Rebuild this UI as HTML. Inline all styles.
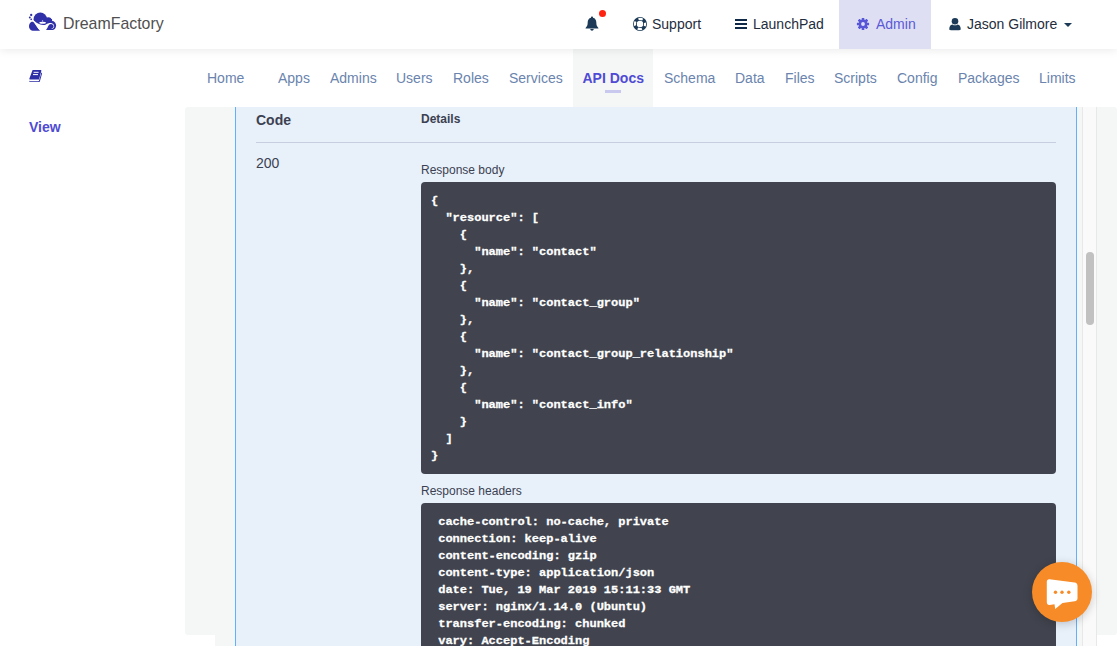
<!DOCTYPE html>
<html>
<head>
<meta charset="utf-8">
<title>DreamFactory</title>
<style>
*{box-sizing:border-box;margin:0;padding:0}
html,body{width:1117px;height:646px;overflow:hidden;background:#fff;font-family:"Liberation Sans",sans-serif;}
body{position:relative}
.abs{position:absolute}
#topbar{position:absolute;left:0;top:0;width:1117px;height:49px;background:#fff;box-shadow:0 1px 9px rgba(0,0,0,.09);z-index:5}
#brand{position:absolute;left:63px;top:13.5px;font-size:17px;color:#505050;white-space:nowrap;transform-origin:left center;transform:scaleX(.935)}
.tn{position:absolute;top:0;height:49px;line-height:48px;font-size:14px;color:#1f2d3d;white-space:nowrap}
#adminbg{position:absolute;left:839px;top:0;width:92px;height:49px;background:#dfdff4}
#nav2{position:absolute;left:0;top:49px;width:1117px;height:58px;background:#fff;z-index:3}
.n2{position:absolute;top:0;height:56px;line-height:58px;font-size:14px;color:#6a84ad;white-space:nowrap}
#apibg{position:absolute;left:573px;top:0;width:80px;height:58px;background:#f5f7f7}
#apidocs{color:#4f4bd4;font-weight:bold}
#apiul{position:absolute;left:605px;top:41px;width:16px;height:3px;background:#c9c9f0}
#view{position:absolute;left:29px;top:119px;font-size:14px;font-weight:bold;color:#4f4bd4}
#panel{position:absolute;left:185px;top:107px;width:932px;height:528px;background:#f5f7f7;border-radius:3px;z-index:1}
#panel2{position:absolute;left:215px;top:107px;width:882px;height:541px;background:#f5f7f7;z-index:1}
#opblock{position:absolute;left:235px;top:100px;width:842px;height:560px;background:#e8f0fa;border:1px solid #61affe;z-index:2}
#sbtrack{position:absolute;left:1082px;top:107px;width:15px;height:541px;background:#fafafa;border-left:1px solid #e8e8e8;border-right:1px solid #e8e8e8;z-index:2}
#sbthumb{position:absolute;left:1086px;top:252px;width:8px;height:73px;border-radius:4px;background:#c1c1c1;z-index:3}
.h{position:absolute;z-index:3;white-space:nowrap}
#hr{position:absolute;left:256px;top:142px;width:800px;height:1px;background:#c5cfdf;z-index:3}
pre{position:absolute;z-index:3;background:#41444e;color:#fff;font-family:"Liberation Mono",monospace;font-weight:bold;font-size:12px;line-height:17px;border-radius:4px;white-space:pre}
pre span{display:block;height:17px;transform:scaleY(.87);transform-origin:0 12.5px;-webkit-text-stroke:.3px #fff}
#chat{position:absolute;left:1032px;top:562px;width:60px;height:60px;border-radius:50%;background:#f68b28;z-index:10;box-shadow:0 2px 10px rgba(0,0,0,.2)}
</style>
</head>
<body>
<div id="topbar">
  <svg id="logo" style="position:absolute;left:24px;top:8px" width="40" height="30" viewBox="0 0 40 30">
<g fill="#3030a8">
<circle cx="7.2" cy="7" r="1.15"/><circle cx="5.8" cy="9.5" r=".95"/><circle cx="7.2" cy="11.4" r=".8"/>
<circle cx="16.3" cy="11.3" r="6.7"/>
<circle cx="24.3" cy="12.5" r="3.3"/>
<ellipse cx="28.2" cy="17.6" rx="3.9" ry="4.5"/>
<path d="M10 11 L28 11 L29 22.1 L21.5 22.1 L13 18 Z"/>
<path d="M8.2 13.6 C5.6 14.4 4.5 17.6 5.3 19.9 C6 21.9 7.8 22.8 10 22.8 L16.2 22.8 C13.6 20.2 11.6 16.6 9.9 14.3 C9.5 13.7 8.8 13.4 8.2 13.6 Z"/>
</g>
<path fill="#fff" d="M7 12.7 C8.5 12.1 9.6 12.2 10.5 13.1 C11.5 14.2 12.8 15.1 14 15.6 C16 16.5 19 17.8 22 16.4 C23.5 15.7 25 14.9 27 15.1 C29.1 15.4 30.3 16.8 30.2 18.5 C30.1 20 29 20.9 27.6 20.7 L27.6 20.2 C28.7 20.3 29.6 19.5 29.6 18.3 C29.6 17 28.4 16 27 16 C25.4 16 24.5 17.4 24 18.6 C23.3 20.3 22.6 21.6 21.4 22.9 L16.4 22.9 C14 20.5 12 17 10 14.5 C9.2 13.5 8 13.2 7 12.7 Z"/>
<ellipse cx="18.6" cy="14.7" rx="3.3" ry=".95" fill="#fff"/>
<rect x="18.1" y="12" width="1" height="2.2" fill="#a5a5dc"/>
</svg>
  <div id="brand">DreamFactory</div>
  <div id="adminbg"></div>

  <svg style="position:absolute;left:585px;top:16px" width="14" height="16" viewBox="0 0 14 16"><path fill="#1c3a57" d="M7 .4 C7.6 .4 8 .8 8 1.4 L8 1.7 C10.2 2.2 11.3 4 11.3 6.3 C11.3 9.3 12 10.6 13.4 11.9 L13.4 12.6 L.6 12.6 L.6 11.9 C2 10.6 2.7 9.3 2.7 6.3 C2.7 4 3.8 2.2 6 1.7 L6 1.4 C6 .8 6.4 .4 7 .4 Z M5.3 13.1 L8.7 13.1 C8.7 14.1 7.9 14.8 7 14.8 C6.1 14.8 5.3 14.1 5.3 13.1Z"/></svg>
  <div style="position:absolute;left:599px;top:10px;width:7px;height:7px;border-radius:50%;background:#ff2412"></div>
  <svg style="position:absolute;left:632px;top:16px" width="16" height="16" viewBox="0 0 16 16"><circle cx="8" cy="8" r="5.1" fill="none" stroke="#1c3a57" stroke-width="3.8"/><circle cx="8" cy="8" r="5.1" fill="none" stroke="#fff" stroke-width="2.1" stroke-dasharray="4.4 3.61" stroke-dashoffset="2.2"/></svg>
  <div style="position:absolute;left:735px;top:19px;width:12px;height:2px;background:#0f2a48;box-shadow:0 4px 0 #0f2a48,0 8px 0 #0f2a48"></div>
  <svg style="position:absolute;left:856px;top:17px" width="14" height="14" viewBox="-7 -7 14 14"><g fill="#5656d6"><circle r="4.4"/><g id="t"><rect x="-1.3" y="-6.1" width="2.6" height="12.2" rx=".4"/><rect x="-6.1" y="-1.3" width="12.2" height="2.6" rx=".4"/></g><use href="#t" transform="rotate(45)"/></g><circle r="1.9" fill="#dfdff5"/></svg>
  <svg style="position:absolute;left:949px;top:17px" width="12" height="14" viewBox="0 0 12 14"><g fill="#1c3a57"><circle cx="6" cy="4.2" r="3.3"/><path d="M.3 12 C.3 9.3 1.5 7.6 3.4 7.4 C4.1 8 5 8.3 6 8.3 C7 8.3 7.9 8 8.6 7.4 C10.5 7.6 11.7 9.3 11.7 12 C11.7 12.8 11 13.2 10.2 13.2 L1.8 13.2 C1 13.2 .3 12.8 .3 12Z"/></g></svg>
  <div style="position:absolute;left:1064px;top:23px;width:0;height:0;border-left:4px solid transparent;border-right:4px solid transparent;border-top:4px solid #1c3a57"></div>
  <div class="tn" style="left:652px">Support</div>
  <div class="tn" style="left:753px">LaunchPad</div>
  <div class="tn" style="left:876px;color:#5a5ad6">Admin</div>
  <div class="tn" style="left:967px">Jason Gilmore</div>
</div>
<div id="nav2">
  <div id="apibg"></div>
  <div class="n2" style="left:207px">Home</div>
  <div class="n2" style="left:278px">Apps</div>
  <div class="n2" style="left:330px">Admins</div>
  <div class="n2" style="left:396px">Users</div>
  <div class="n2" style="left:453px">Roles</div>
  <div class="n2" style="left:509px">Services</div>
  <div class="n2" id="apidocs" style="left:582.5px">API Docs</div>
  <div id="apiul"></div>
  <div class="n2" style="left:664px">Schema</div>
  <div class="n2" style="left:735px">Data</div>
  <div class="n2" style="left:785px">Files</div>
  <div class="n2" style="left:834px">Scripts</div>
  <div class="n2" style="left:897px">Config</div>
  <div class="n2" style="left:958px">Packages</div>
  <div class="n2" style="left:1039px">Limits</div>
</div>
<svg style="position:absolute;left:28px;top:69px;z-index:4" width="16" height="14" viewBox="0 0 16 14"><g fill="#2e2ea6"><path d="M4.6 1 L12.6 1 C13.2 1 13.5 1.4 13.3 2 L11 10.6 L2.2 10.6 C1.5 10.6 1.2 10 1.4 9.4 Z"/><path d="M13.4 3.4 C14 3.6 14.2 4.2 14 4.8 L11.9 12.2 C11.7 12.8 11.3 13.1 10.7 13.1 L2.6 13.1 C1.6 13.1 1 12.3 1.2 11.4 C1.5 12 2 12.2 2.6 12.2 L10.4 12.2 C10.8 12.2 11 12 11.1 11.6 Z"/></g><path d="M5.6 3.3 L10.6 3.3 M5 5.6 L10 5.6" stroke="#fff" stroke-width="1"/></svg>
<div id="view">View</div>
<div id="panel"></div>
<div id="panel2"></div>
<div id="opblock"></div>
<div id="sbtrack"></div>
<div id="sbthumb"></div>
<div class="h" style="left:256px;top:112px;font-size:14px;font-weight:bold;color:#3b4151">Code</div>
<div class="h" style="left:421px;top:112px;font-size:12px;font-weight:bold;color:#3b4151">Details</div>
<div id="hr"></div>
<div class="h" style="left:256px;top:155px;font-size:14px;color:#3b4151">200</div>
<div class="h" style="left:421px;top:163px;font-size:12px;color:#3b4151">Response body</div>
<pre style="left:421px;top:182px;width:635px;height:292px;padding:11px 10px 9px"><span>{</span><span>  "resource": [</span><span>    {</span><span>      "name": "contact"</span><span>    },</span><span>    {</span><span>      "name": "contact_group"</span><span>    },</span><span>    {</span><span>      "name": "contact_group_relationship"</span><span>    },</span><span>    {</span><span>      "name": "contact_info"</span><span>    }</span><span>  ]</span><span>}</span></pre>
<div class="h" style="left:421px;top:484px;font-size:12px;color:#3b4151">Response headers</div>
<pre style="left:421px;top:503px;width:635px;height:160px;padding:11px 10px 9px"><span> cache-control: no-cache, private </span><span> connection: keep-alive </span><span> content-encoding: gzip </span><span> content-type: application/json </span><span> date: Tue, 19 Mar 2019 15:11:33 GMT </span><span> server: nginx/1.14.0 (Ubuntu) </span><span> transfer-encoding: chunked </span><span> vary: Accept-Encoding </span></pre>
<div id="chat"><svg style="position:absolute;left:0;top:0" width="60" height="60" viewBox="0 0 60 60"><path fill="#fff" d="M17.5 17.3 L42.6 20.6 C44.4 20.9 45.5 22 45.5 23.8 L45.5 36.3 C45.5 38 44.5 39.1 42.7 39.3 L30.5 41 L23.2 47 L22.5 42.2 L17.6 42.9 C15.9 43.1 14.8 42 14.8 40.3 L14.8 19.8 C14.8 18.1 15.9 17.1 17.5 17.3 Z"/><g fill="#f68b28"><circle cx="23.5" cy="30.2" r="1.7"/><circle cx="30" cy="30.2" r="1.7"/><circle cx="36.8" cy="30.2" r="1.7"/></g></svg></div>
</body>
</html>
